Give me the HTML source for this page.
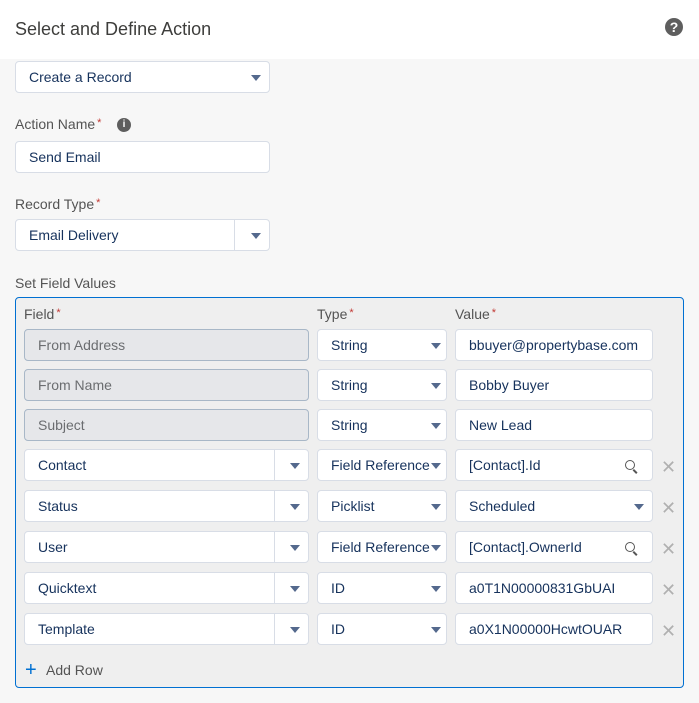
<!DOCTYPE html>
<html><head><style>
*{box-sizing:border-box;margin:0;padding:0}
body{width:699px;height:703px;background:#f7f7f7;font-family:"Liberation Sans",sans-serif;position:relative;overflow:hidden;font-size:14px}
.hdr{position:absolute;left:0;top:0;width:699px;height:59px;background:#fff}
.t{position:absolute;left:15px;top:19px;font-size:18px;color:#3e3e3c}
.q{position:absolute;left:665px;top:18px;width:18px;height:18px;border-radius:50%;background:#5e5e5e;color:#fff;font-weight:bold;font-size:14px;text-align:center;line-height:18px}
.lbl{position:absolute;color:#545454;font-size:14px}
.req{color:#c23934;font-size:11px;vertical-align:3px;margin-left:2px}
.in{position:absolute;height:32px;background:#fff;border:1px solid #d8dde6;border-radius:4px;color:#16325c;padding-left:13px;line-height:30px;white-space:nowrap;overflow:hidden}
.dis{background:#e6e7ea;border-color:#a8b7c7;color:#6b6d70}
.ar{position:absolute;width:0;height:0;border-left:5px solid transparent;border-right:5px solid transparent;border-top:6px solid #54698d;top:13px}
.sep{position:absolute;top:0;bottom:0;width:1px;background:#d8dde6}
.x{position:absolute;color:#b0b0b0;font-size:18px;left:661px}
.box{position:absolute;left:15px;top:297px;width:669px;height:391px;border:1px solid #0070d2;border-radius:4px;background:#efefef}
.mag{position:absolute;right:17px;top:10px;width:10px;height:10px;border:1.6px solid #555;border-radius:50%}
.mag:after{content:"";position:absolute;left:8px;top:8px;width:5px;height:1.6px;background:#555;transform:rotate(45deg);transform-origin:0 0}
</style></head><body>
<div class="hdr"><div class="t">Select and Define Action</div><div class="q">?</div></div>

<div class="in" style="left:15px;top:61px;width:255px">Create a Record<div class="ar" style="right:8px"></div></div>
<div class="lbl" style="left:15px;top:116px">Action Name<span class="req">*</span></div>
<div style="position:absolute;left:117px;top:118px;width:14px;height:14px;border-radius:50%;background:#5e5e5e;color:#fff;font-size:10px;font-weight:bold;text-align:center;line-height:14px">i</div>
<div class="in" style="left:15px;top:141px;width:255px">Send Email</div>
<div class="lbl" style="left:15px;top:196px">Record Type<span class="req">*</span></div>
<div class="in" style="left:15px;top:219px;width:255px">Email Delivery<div class="sep" style="left:218px"></div><div class="ar" style="right:8px"></div></div>
<div class="lbl" style="left:15px;top:275px">Set Field Values</div>

<div class="box"></div>
<div class="lbl" style="left:24px;top:306px">Field<span class="req">*</span></div>
<div class="lbl" style="left:317px;top:306px">Type<span class="req">*</span></div>
<div class="lbl" style="left:455px;top:306px">Value<span class="req">*</span></div>

<div class="in dis" style="left:24px;top:329px;width:285px">From Address</div>
<div class="in" style="left:317px;top:329px;width:130px">String<div class="ar" style="right:5px"></div></div>
<div class="in" style="left:455px;top:329px;width:198px">bbuyer@propertybase.com</div>

<div class="in dis" style="left:24px;top:369px;width:285px">From Name</div>
<div class="in" style="left:317px;top:369px;width:130px">String<div class="ar" style="right:5px"></div></div>
<div class="in" style="left:455px;top:369px;width:198px">Bobby Buyer</div>

<div class="in dis" style="left:24px;top:409px;width:285px">Subject</div>
<div class="in" style="left:317px;top:409px;width:130px">String<div class="ar" style="right:5px"></div></div>
<div class="in" style="left:455px;top:409px;width:198px">New Lead</div>

<div class="in" style="left:24px;top:449px;width:285px">Contact<div class="sep" style="left:249px"></div><div class="ar" style="right:8px"></div></div>
<div class="in" style="left:317px;top:449px;width:130px">Field Reference<div class="ar" style="right:5px"></div></div>
<div class="in" style="left:455px;top:449px;width:198px">[Contact].Id<div class="mag"></div></div>
<div class="x" style="top:457px">✕</div>

<div class="in" style="left:24px;top:490px;width:285px">Status<div class="sep" style="left:249px"></div><div class="ar" style="right:8px"></div></div>
<div class="in" style="left:317px;top:490px;width:130px">Picklist<div class="ar" style="right:5px"></div></div>
<div class="in" style="left:455px;top:490px;width:198px">Scheduled<div class="ar" style="right:8px"></div></div>
<div class="x" style="top:498px">✕</div>

<div class="in" style="left:24px;top:531px;width:285px">User<div class="sep" style="left:249px"></div><div class="ar" style="right:8px"></div></div>
<div class="in" style="left:317px;top:531px;width:130px">Field Reference<div class="ar" style="right:5px"></div></div>
<div class="in" style="left:455px;top:531px;width:198px">[Contact].OwnerId<div class="mag"></div></div>
<div class="x" style="top:539px">✕</div>

<div class="in" style="left:24px;top:572px;width:285px">Quicktext<div class="sep" style="left:249px"></div><div class="ar" style="right:8px"></div></div>
<div class="in" style="left:317px;top:572px;width:130px">ID<div class="ar" style="right:5px"></div></div>
<div class="in" style="left:455px;top:572px;width:198px">a0T1N00000831GbUAI</div>
<div class="x" style="top:580px">✕</div>

<div class="in" style="left:24px;top:613px;width:285px">Template<div class="sep" style="left:249px"></div><div class="ar" style="right:8px"></div></div>
<div class="in" style="left:317px;top:613px;width:130px">ID<div class="ar" style="right:5px"></div></div>
<div class="in" style="left:455px;top:613px;width:198px">a0X1N00000HcwtOUAR</div>
<div class="x" style="top:621px">✕</div>

<div style="position:absolute;left:25px;top:662px;color:#0070d2;font-size:20px;line-height:16px">+</div>
<div class="lbl" style="left:46px;top:662px">Add Row</div>
</body></html>
